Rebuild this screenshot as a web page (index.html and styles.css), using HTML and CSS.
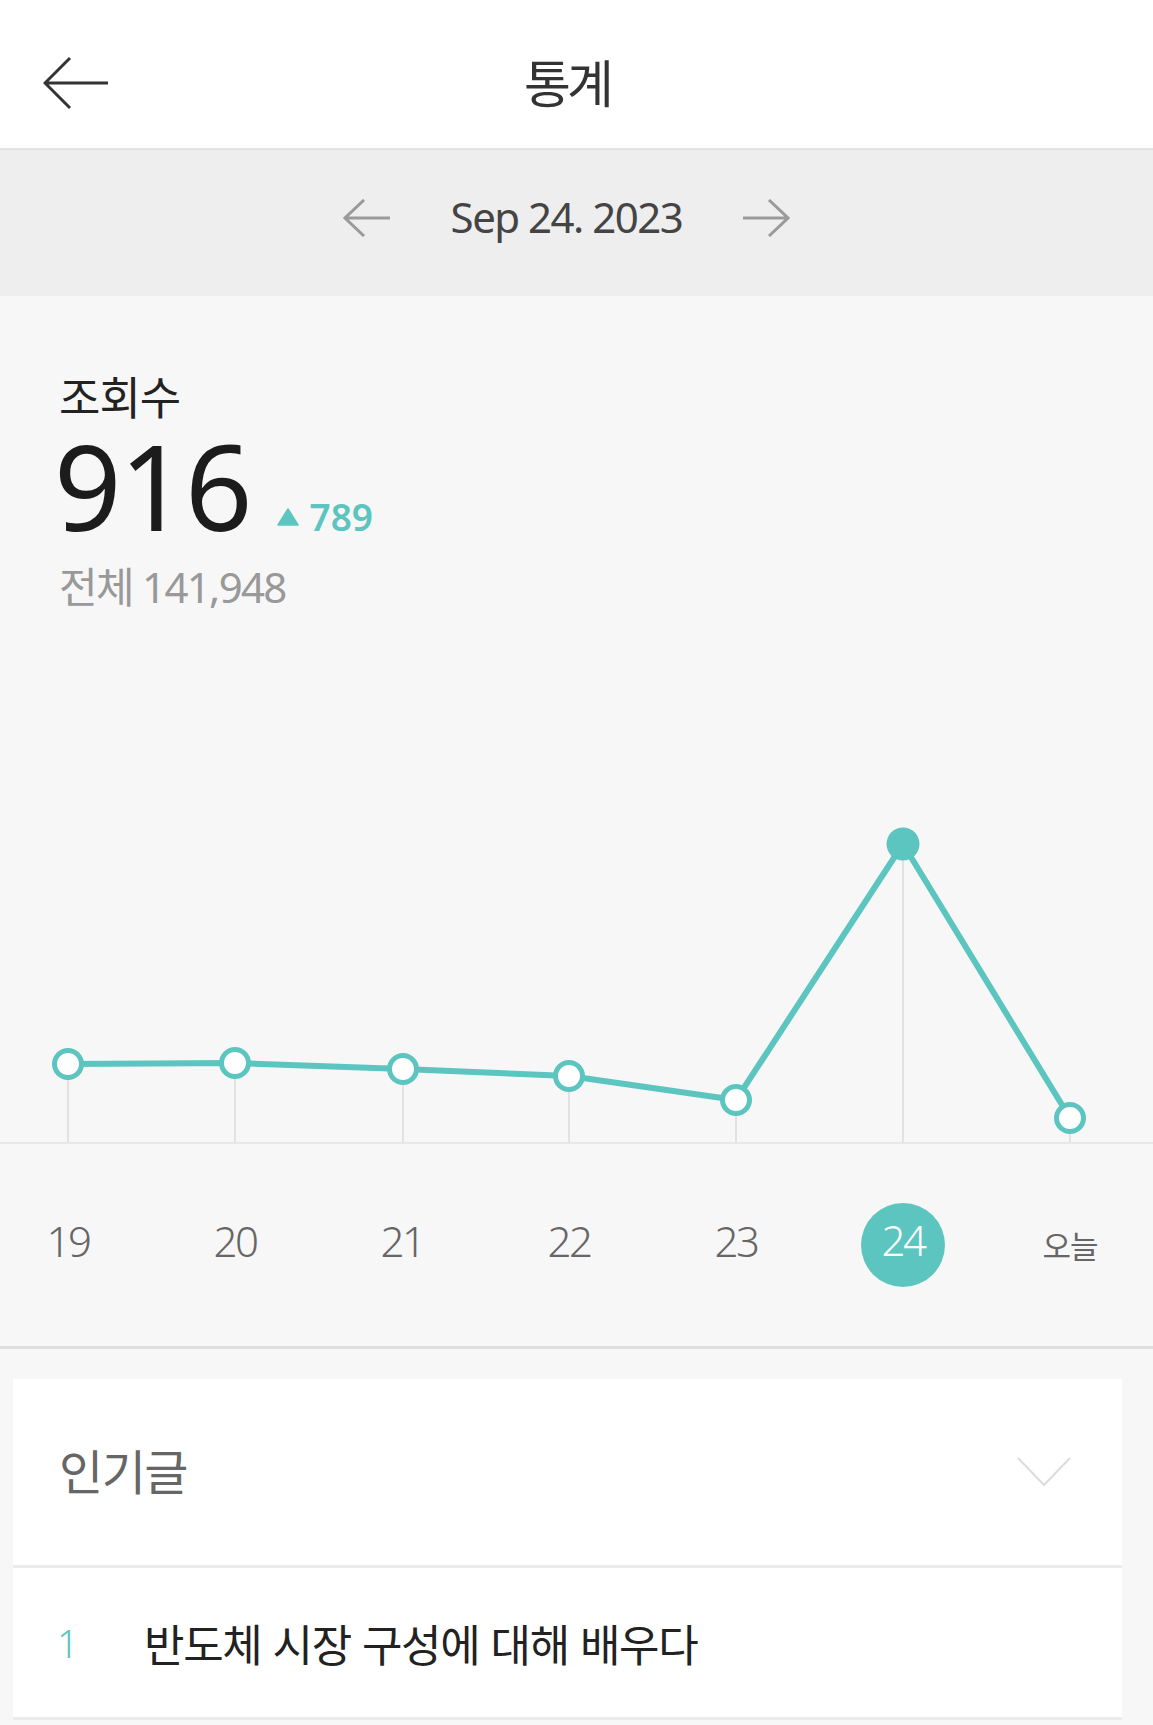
FILE: index.html
```html
<!DOCTYPE html>
<html lang="ko">
<head>
<meta charset="utf-8">
<title>통계</title>
<link rel="stylesheet" href="styles.css">
</head>
<body>
<header class="topbar">
  <button class="back" aria-label="뒤로">
    <svg width="66" height="54" viewBox="0 0 66 54"><path d="M27 2 L2 27 L27 52 M2 27 L65 27" fill="none" stroke="#333" stroke-width="3"/></svg>
  </button>
  <h1 class="title">통계</h1>
  <span class="spacer"></span>
</header>

<nav class="datebar">
  <svg class="darrow" width="48" height="38" viewBox="0 0 48 38"><path d="M21 1 L2 19 L21 37 M2 19 L47 19" fill="none" stroke="#9a9a9a" stroke-width="3"/></svg>
  <span class="date">Sep 24. 2023</span>
  <svg class="darrow" width="48" height="38" viewBox="0 0 48 38"><path d="M27 1 L46 19 L27 37 M46 19 L1 19" fill="none" stroke="#9a9a9a" stroke-width="3"/></svg>
</nav>

<main class="stats">
  <section class="summary">
    <div class="label">조회수</div>
    <div class="count-row">
      <span class="count">916</span>
      <span class="delta">
        <svg class="tri" width="22" height="18" viewBox="0 0 22 18"><path d="M11 1 L21 17 L1 17 Z" fill="#5cc5bf" stroke="#5cc5bf" stroke-width="1.5" stroke-linejoin="round"/></svg>
        <span class="delta-num">789</span>
      </span>
    </div>
    <div class="total">전체 141,948</div>
  </section>

  <svg class="chart" width="1153" height="532" viewBox="0 0 1153 532">
    <g stroke="#e2e2e2" stroke-width="2">
      <line x1="68" y1="452" x2="68" y2="531"/>
      <line x1="235" y1="451" x2="235" y2="531"/>
      <line x1="403" y1="457" x2="403" y2="531"/>
      <line x1="569" y1="464" x2="569" y2="531"/>
      <line x1="736" y1="488" x2="736" y2="531"/>
      <line x1="903" y1="232" x2="903" y2="531"/>
      <line x1="1070" y1="506" x2="1070" y2="531"/>
    </g>
    <line x1="0" y1="531" x2="1153" y2="531" stroke="#e8e8e8" stroke-width="2"/>
    <path d="M68 452 L235 451 L403 457 L569 464 L736 488 L903 232 L1070 506" fill="none" stroke="#5cc5bf" stroke-width="6" stroke-linejoin="round"/>
    <g fill="#fff" stroke="#5cc5bf" stroke-width="5">
      <circle cx="68" cy="452" r="13.5"/>
      <circle cx="235" cy="451" r="13.5"/>
      <circle cx="403" cy="457" r="13.5"/>
      <circle cx="569" cy="464" r="13.5"/>
      <circle cx="736" cy="488" r="13.5"/>
      <circle cx="1070" cy="506" r="13.5"/>
    </g>
    <circle cx="903" cy="232" r="16.5" fill="#5cc5bf"/>
  </svg>

  <div class="days">
    <span class="day">19</span>
    <span class="day">20</span>
    <span class="day">21</span>
    <span class="day">22</span>
    <span class="day">23</span>
    <span class="day day-wrap"><span class="day-active">24</span></span>
    <span class="day day-today">오늘</span>
  </div>
</main>

<section class="popular">
  <div class="card">
    <div class="card-head">
      <span class="card-title">인기글</span>
      <svg width="54" height="30" viewBox="0 0 54 30"><path d="M1 1 L27 28 L53 1" fill="none" stroke="#dcdcdc" stroke-width="2"/></svg>
    </div>
    <div class="post">
      <span class="rank">1</span>
      <span class="post-title">반도체 시장 구성에 대해 배우다</span>
    </div>
  </div>
</section>
</body>
</html>
```

FILE: styles.css
```css
* { box-sizing: border-box; }
html, body { margin: 0; padding: 0; }
body {
  width: 1153px;
  min-height: 1725px;
  background: #f7f7f7;
  font-family: "Noto Sans", "Noto Sans CJK KR", sans-serif;
  color: #222;
}

.topbar {
  height: 150px;
  background: #fff;
  border-bottom: 2px solid #e3e3e3;
  display: flex;
  align-items: center;
  padding: 18px 0 0 43px;
}
.back {
  border: 0;
  background: none;
  padding: 0;
  width: 66px;
  height: 54px;
  display: flex;
}
.title {
  margin: 0;
  flex: 1;
  text-align: center;
  font-family: "Noto Sans CJK KR", sans-serif;
  font-weight: 400;
  font-size: 51px;
  line-height: 1;
  letter-spacing: -4px;
  color: #333;
  padding-right: 128px;
  padding-bottom: 4px;
}
.spacer { width: 0; }

.datebar {
  height: 146px;
  background: #eeeeee;
  display: flex;
  align-items: center;
  justify-content: center;
  padding: 0 20px 11px 0;
}
.date {
  font-size: 42px;
  letter-spacing: -1.5px;
  color: #444;
  margin: 0 60px;
  line-height: 1;
  padding-bottom: 2px;
}

.stats {
  background: #f7f7f7;
  border-bottom: 3px solid #dfdfdf;
}
.summary {
  padding: 76px 0 0 59px;
}
.label {
  font-family: "Noto Sans CJK KR", sans-serif;
  font-size: 45px;
  line-height: 48px;
  color: #222;
  letter-spacing: -1px;
}
.count-row {
  margin-top: 6px;
  margin-left: -5px;
  display: flex;
  align-items: baseline;
  height: 120px;
}
.count {
  font-size: 118px;
  line-height: 120px;
  letter-spacing: -2px;
  color: #1c1c1c;
}
.delta {
  margin-left: 26px;
  display: inline-flex;
  align-items: baseline;
  gap: 11px;
  color: #5cc5bf;
}
.tri { align-self: baseline; position: relative; top: -5px; }
.delta-num {
  font-size: 37px;
  font-weight: 600;
  line-height: 1;
}
.total {
  margin-top: 16px;
  font-size: 42px;
  line-height: 50px;
  color: #999;
  letter-spacing: -1.7px;
}

.chart { display: block; }

.days {
  height: 202px;
  display: flex;
  justify-content: space-between;
  align-items: center;
  padding: 0 33px 0 18px;
}
.day {
  width: 100px;
  display: flex;
  justify-content: center;
  font-size: 42px;
  font-weight: 300;
  letter-spacing: -2.5px;
  color: #666;
  line-height: 1;
  padding-bottom: 8px;
}
.day-wrap { padding-bottom: 0; }
.day-active {
  width: 84px;
  height: 84px;
  border-radius: 50%;
  background: #5cc5bf;
  color: #fff;
  display: flex;
  align-items: center;
  justify-content: center;
  padding-bottom: 10px;
}
.day-today {
  font-family: "Noto Sans CJK KR", sans-serif;
  font-size: 31px;
  font-weight: 400;
  letter-spacing: -1px;
  padding-top: 0;
  padding-bottom: 2px;
}

.popular {
  padding: 30px 31px 0 13px;
}
.card {
  background: #fff;
  border-bottom: 3px solid #ececec;
}
.card-head {
  height: 189px;
  display: flex;
  align-items: center;
  justify-content: space-between;
  padding: 0 51px 6px 46px;
  border-bottom: 3px solid #ececec;
}
.card-title {
  font-family: "Noto Sans CJK KR", sans-serif;
  font-size: 48px;
  letter-spacing: -1.5px;
  color: #666;
  line-height: 1;
}
.card-head svg { margin-top: 6px; }
.post {
  height: 149px;
  display: flex;
  align-items: center;
  padding-left: 44px;
}
.rank {
  width: 87px;
  font-size: 38px;
  font-weight: 300;
  color: #5cc5bf;
  line-height: 1;
}
.post-title {
  font-family: "Noto Sans CJK KR", sans-serif;
  font-size: 44px;
  letter-spacing: -1.3px;
  color: #222;
  line-height: 1;
}
```
